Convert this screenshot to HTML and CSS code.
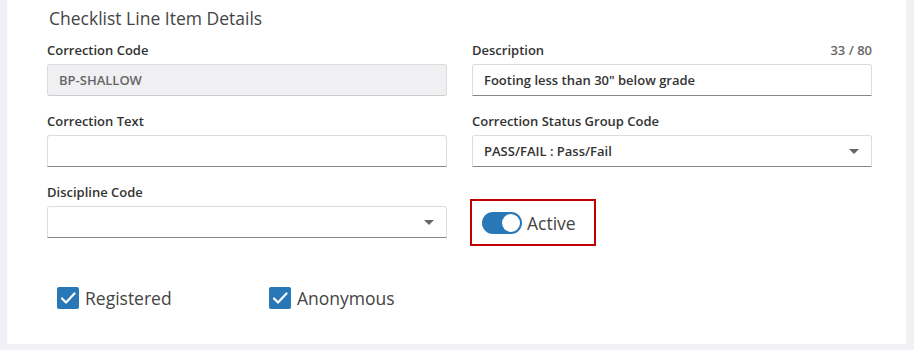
FILE: index.html
```html
<!DOCTYPE html>
<html>
<head>
<meta charset="utf-8">
<link rel="stylesheet" href="styles.css">
</head>
<body>
<div class="card">
  <h2 class="title">Checklist Line Item Details</h2>
  <div class="grid">
    <div class="field">
      <div class="label-row"><label>Correction Code</label></div>
      <div class="input disabled">BP-SHALLOW</div>
    </div>
    <div class="field">
      <div class="label-row"><label>Description</label><span class="count">33 / 80</span></div>
      <div class="input">Footing less than 30" below grade</div>
    </div>
    <div class="field">
      <div class="label-row"><label>Correction Text</label></div>
      <div class="input"></div>
    </div>
    <div class="field">
      <div class="label-row"><label>Correction Status Group Code</label></div>
      <div class="input select">PASS/FAIL : Pass/Fail<span class="caret"></span></div>
    </div>
    <div class="field">
      <div class="label-row"><label>Discipline Code</label></div>
      <div class="input select"><span class="caret"></span></div>
    </div>
    <div class="field toggle-cell">
      <div class="toggle-box">
        <span class="switch"><span class="knob"></span></span>
        <span class="toggle-label">Active</span>
      </div>
    </div>
  </div>
  <div class="checks">
    <div class="check">
      <span class="box"><svg width="22" height="22" viewBox="0 0 22 22"><path d="M5 11.5 L9 15.5 L17.5 6.5" fill="none" stroke="#fff" stroke-width="2.2" stroke-linecap="round" stroke-linejoin="round"/></svg></span>
      <span class="check-label">Registered</span>
    </div>
    <div class="check">
      <span class="box"><svg width="22" height="22" viewBox="0 0 22 22"><path d="M5 11.5 L9 15.5 L17.5 6.5" fill="none" stroke="#fff" stroke-width="2.2" stroke-linecap="round" stroke-linejoin="round"/></svg></span>
      <span class="check-label">Anonymous</span>
    </div>
  </div>
</div>
</body>
</html>
```
FILE: styles.css
```css
html, body {
  margin: 0;
  padding: 0;
  background: #f0f0f5;
  font-family: "Open Sans", "Liberation Sans", sans-serif;
  color: #333;
}
.card {
  background: #fff;
  margin: 0 8px 0 7px;
  height: 344px;
  box-sizing: border-box;
  padding: 5px 35px 0 40px;
}
.title {
  margin: 0 0 0 2px;
  font-size: 17.5px;
  font-weight: 400;
  color: #444;
  line-height: 26px;
}
.grid {
  display: grid;
  grid-template-columns: 400px 400px;
  column-gap: 25px;
  row-gap: 16px;
  margin-top: 10px;
}
.label-row {
  display: flex;
  justify-content: space-between;
  align-items: center;
  height: 18px;
  margin-bottom: 5px;
}
label {
  font-size: 13px;
  font-weight: 600;
  color: #333;
}
.count {
  font-size: 13px;
  font-weight: 600;
  color: #666;
}
.input {
  position: relative;
  height: 32px;
  box-sizing: border-box;
  border: 1px solid #dcdcdc;
  border-bottom: 1px solid #888;
  border-radius: 3px 3px 0 0;
  padding: 0 11px;
  font-size: 13px;
  font-weight: 600;
  line-height: 30px;
  color: #333;
  background: #fff;
}
.input.disabled {
  background: #f0f0f3;
  color: #666;
  border-bottom-color: #ccc;
  border-radius: 3px;
}
.caret {
  position: absolute;
  right: 12px;
  top: 13px;
  width: 0;
  height: 0;
  border-left: 5px solid transparent;
  border-right: 5px solid transparent;
  border-top: 5px solid #666;
}
.toggle-cell {
  display: flex;
  align-items: flex-end;
}
.toggle-box {
  display: flex;
  align-items: center;
  box-sizing: border-box;
  width: 126px;
  height: 47px;
  border: 2px solid #c00000;
  padding-left: 10px;
  margin-left: -2px;
  margin-bottom: -8px;
}
.switch {
  position: relative;
  width: 40px;
  height: 22px;
  border-radius: 11px;
  background: #2878b8;
  display: inline-block;
}
.knob {
  position: absolute;
  right: 2px;
  top: 2px;
  width: 18px;
  height: 18px;
  border-radius: 50%;
  background: #fff;
}
.toggle-label {
  margin-left: 5px;
  font-size: 17.5px;
  color: #444;
}
.checks {
  display: flex;
  margin-top: 48px;
  padding-left: 10px;
}
.check {
  display: flex;
  align-items: center;
  width: 212px;
}
.box {
  width: 22px;
  height: 22px;
  border-radius: 2px;
  background: #2878b8;
  display: inline-block;
}
.box svg { display: block; }
.check-label {
  margin-left: 6px;
  font-size: 17.5px;
  color: #444;
}
```
